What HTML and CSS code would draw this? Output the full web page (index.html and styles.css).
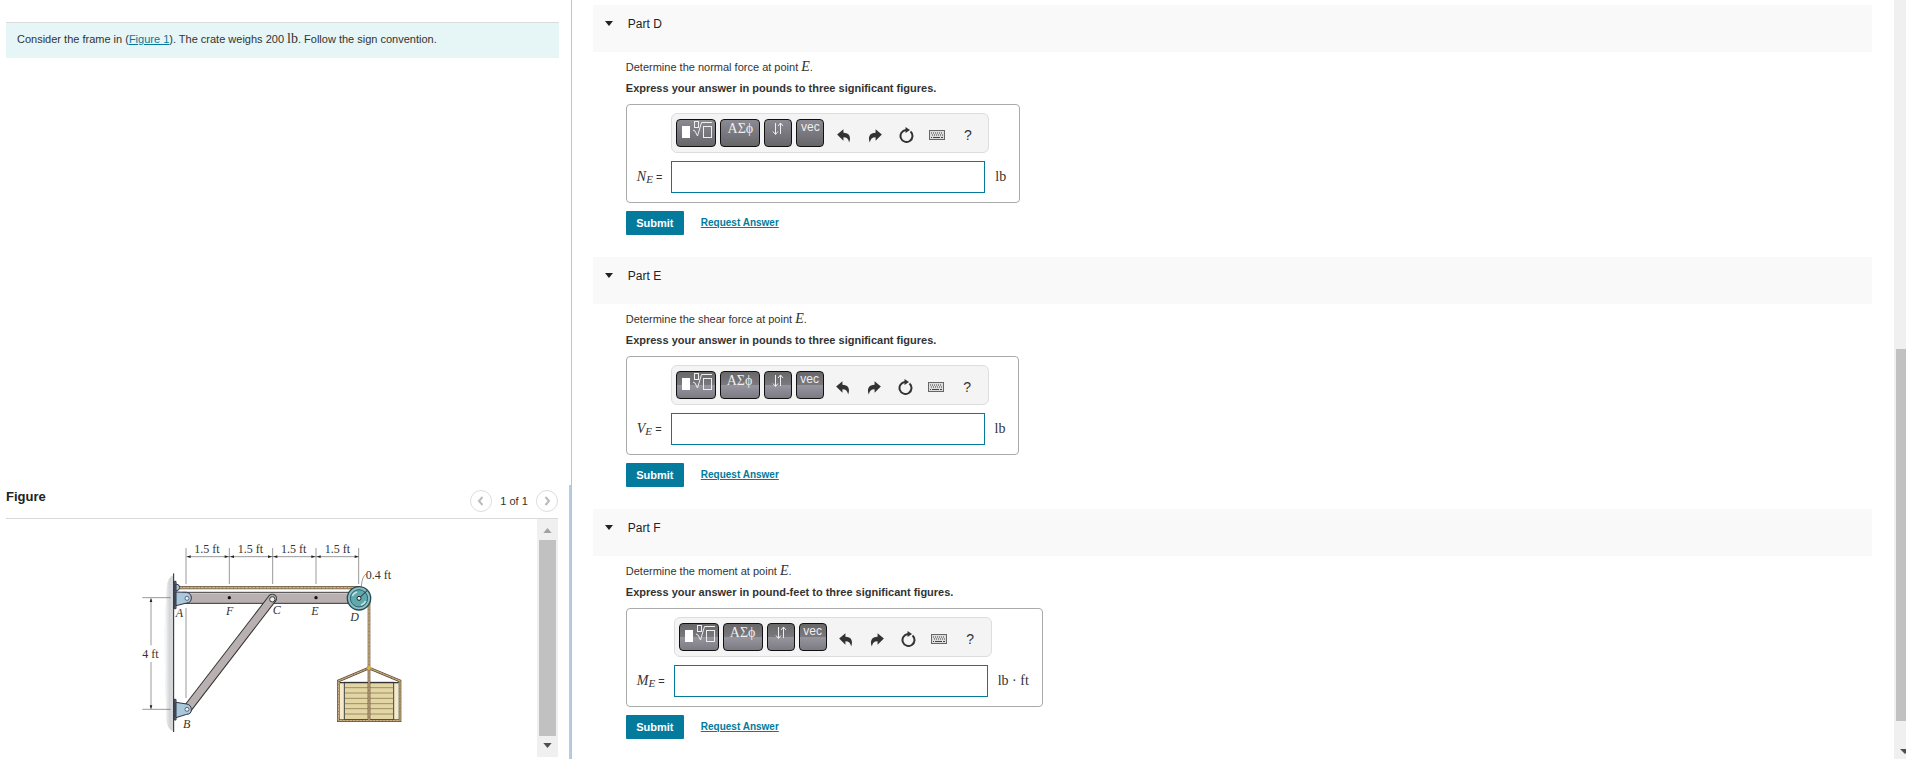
FILE: index.html
```html
<!DOCTYPE html>
<html lang="en">
<head>
  <meta charset="UTF-8">
  <meta name="viewport" content="width=device-width, initial-scale=1.0">
  <title>Frame Problem</title>
  <link rel="stylesheet" href="styles.css">
</head>
<body>
  <!-- shared icons -->
  <svg class="sprite" aria-hidden="true">
    <symbol id="icon-template" viewBox="0 0 34 24">
      <rect x="3" y="6" width="8" height="12" fill="#fff"/>
      <rect x="15.500" y="1.500" width="4" height="6" fill="none" stroke="#eee"/>
      <path d="M14 10l2 1 2.500 5 4-13.500H33" fill="none" stroke="#eee"/>
      <rect x="24.500" y="6.500" width="8" height="11" fill="none" stroke="#eee"/>
    </symbol>
    <symbol id="icon-arrows" viewBox="0 0 12 14">
      <path d="M3.500 1v11M1 9.500l2.500 3 2.500-3M8.500 12V1M6 4l2.500-3L11 4" fill="none" stroke="#eee"/>
    </symbol>
    <symbol id="icon-undo" viewBox="0 0 14 14">
      <path d="M1 6.500L6.500 2v3c5 0 7 3.500 5 8.500-.500-3-2-4.500-5-4.500v3z" fill="#333"/>
    </symbol>
    <symbol id="icon-redo" viewBox="0 0 14 14">
      <path d="M13 6.500L7.500 2v3c-5 0-7 3.500-5 8.500.500-3 2-4.500 5-4.500v3z" fill="#333"/>
    </symbol>
    <symbol id="icon-reset" viewBox="0 0 16 16">
      <path d="M12.500 4.500A6 6 0 1 1 8 3" fill="none" stroke="#333" stroke-width="2"/>
      <path d="M7.500 0l4.500 3-4.500 3z" fill="#333"/>
    </symbol>
    <symbol id="icon-keyboard" viewBox="0 0 18 12">
      <rect x="1.500" y="1.500" width="15" height="9" fill="#ddd" stroke="#666"/>
      <path d="M3 4h12M4 6h12" stroke="#444" stroke-dasharray="1 1"/>
      <path d="M3 8.500h1M5 8.500h7M13 8.500h2" stroke="#444"/>
    </symbol>
  </svg>

  <div class="page">
    <div class="left-panel">
      <div class="intro">Consider the frame in (<a href="#figure">Figure 1</a>). The crate weighs 200 <span class="unit-text">lb</span>. Follow the sign convention.</div>

      <section class="figure-panel" id="figure">
        <div class="figure-header">
          <h2>Figure</h2>
          <div class="pager">
            <button type="button" aria-label="Previous figure"><svg viewBox="0 0 10 10"><path d="M6.500 1L3 5l3.500 4"/></svg></button>
            <span>1 of 1</span>
            <button type="button" aria-label="Next figure"><svg viewBox="0 0 10 10"><path d="M3.500 1L7 5 3.500 9"/></svg></button>
          </div>
        </div>
        <div class="figure-body">
          <div class="figure-view">
            <svg class="diagram" viewBox="0 0 849 660" role="img" aria-label="Frame with pulley and crate">
              <defs>
                <pattern id="stone" width="14" height="17" patternUnits="userSpaceOnUse">
                  <rect width="14" height="17" fill="#d3d4d6"/>
                  <path d="M2 3h3M9 7h3M4 12h2M11 15h2" stroke="#f4f4f4" stroke-width="2"/>
                </pattern>
                <linearGradient id="wallFade">
                  <stop offset="0" stop-color="#fff"/>
                  <stop offset="0.500" stop-color="#fff" stop-opacity="0"/>
                </linearGradient>
              </defs>
              <!-- wall -->
              <path d="M131 135Q112 140 110 175L104 300 105 430 110 575Q114 600 131 604z" fill="url(#stone)"/>
              <path d="M131 135Q112 140 110 175L104 300 105 430 110 575Q114 600 131 604z" fill="url(#wallFade)"/>
              <path d="M131 130V606" stroke="#222" stroke-width="3"/>

              <!-- dimensions -->
              <g stroke="#666" stroke-width="2" fill="none">
                <path d="M168 54V162M298 54V162M428 54V162M558 54V162M686 54V162M168 234V504"/>
                <path d="M170 80H686M37 203H122M37 538H122M63 206V346M63 396V536"/>
                <path d="M708 132Q696 140 694 168"/>
              </g>
              <path d="M170 80l12-4v8zM296 80l-12-4v8zM300 80l12-4v8zM426 80l-12-4v8zM430 80l12-4v8zM556 80l-12-4v8zM560 80l12-4v8zM686 80l-12-4v8zM63 204l-4 12h8zM63 538l-4-12h8z" fill="#222"/>

              <!-- rope and beam -->
              <path d="M145 173H688" stroke="#69543a" stroke-width="10"/>
              <path d="M145 173H688" stroke="#cdb48c" stroke-width="5"/>
              <path d="M145 173H688" stroke="#8b7352" stroke-width="5" stroke-dasharray="2 9"/>
              <rect x="160" y="187" width="510" height="33" fill="#b9b1b1" stroke="#333" stroke-width="3"/>
              <path d="M160 190H668" stroke="#ddd8d8" stroke-width="2"/>
              <path d="M717 205V415" stroke="#69543a" stroke-width="8"/>
              <path d="M717 205V415" stroke="#d5ba8c" stroke-width="4"/>
              <path d="M717 205V415" stroke="#8b7352" stroke-width="4" stroke-dasharray="2 9"/>

              <!-- brace -->
              <path d="M173 535L427 205" stroke="#333" stroke-width="28" stroke-linecap="round"/>
              <path d="M173 535L427 205" stroke="#b9b1b1" stroke-width="22" stroke-linecap="round"/>
              <circle cx="427" cy="208" r="8" fill="#eee" stroke="#333" stroke-width="3"/>
              <circle cx="298" cy="203" r="5" fill="#111"/>
              <circle cx="558" cy="203" r="5" fill="#111"/>

              <!-- wall brackets -->
              <g fill="#a9c8dc" stroke="#334" stroke-width="3">
                <path d="M133 154h5v82h-5zM133 508h5v62h-5z" fill="#70838f"/>
                <path d="M138 162q11 1 11 10t-11 11z"/>
                <path d="M138 186L170 187Q184 190 184 204T170 219L138 227z"/>
                <path d="M138 517L170 522Q184 525 184 539T170 553L138 563z"/>
                <circle cx="171" cy="205" r="6" fill="#eee" stroke-width="2"/>
                <circle cx="171" cy="538" r="6" fill="#eee" stroke-width="2"/>
              </g>

              <!-- pulley -->
              <circle cx="687" cy="205" r="35" fill="#8dbfc4" stroke="#244a52" stroke-width="4"/>
              <circle cx="687" cy="205" r="26" fill="#5ea9ae" stroke="#2c6269" stroke-width="3"/>
              <path d="M667 198a21 21 0 0 1 14-12M707 213a21 21 0 0 1-14 12" stroke="#c5e5e5" stroke-width="5" fill="none"/>
              <path d="M689 203L711 182" stroke="#222" stroke-width="3"/>
              <circle cx="687" cy="205" r="6" fill="#eee" stroke="#222" stroke-width="3"/>

              <!-- crate -->
              <rect x="630" y="457" width="176" height="112" fill="#f2eacb"/>
              <rect x="643" y="457" width="148" height="112" fill="#e3d6a4" stroke="#444" stroke-width="3"/>
              <path d="M645 473H790M645 489H790M645 505H790M645 521H790M645 536H790M645 552H790" stroke="#74694a" stroke-width="2"/>
              <path d="M630 458H806" stroke="#333" stroke-width="4"/>
              <path d="M717 414L625 453V572H810V453L717 414V570" fill="none" stroke="#594831" stroke-width="8"/>
              <path d="M717 414L625 453V572H810V453L717 414V570" fill="none" stroke="#ceb184" stroke-width="4"/>
              <path d="M717 414L625 453V572H810V453L717 414V570" fill="none" stroke="#8b7352" stroke-width="4" stroke-dasharray="2 8"/>
              <circle cx="717" cy="414" r="6" fill="#e2b13c"/>

              <g class="dimension-text">
                <text x="193" y="70">1.5 ft</text>
                <text x="323" y="70">1.5 ft</text>
                <text x="453" y="70">1.5 ft</text>
                <text x="584" y="70">1.5 ft</text>
                <text x="707" y="147">0.4 ft</text>
                <text x="37" y="384">4 ft</text>
              </g>
              <g class="point-text">
                <text x="137" y="260">A</text>
                <text x="288" y="255">F</text>
                <text x="428" y="251">C</text>
                <text x="544" y="255">E</text>
                <text x="661" y="274">D</text>
                <text x="159" y="593">B</text>
              </g>
            </svg>
          </div>
          <div class="figure-scroll">
            <svg viewBox="0 0 10 6"><path d="M5 0l5 6H0z" fill="#a3a3a3"/></svg>
            <div class="figure-thumb"></div>
            <svg viewBox="0 0 10 6"><path d="M0 0h10L5 6z" fill="#505050"/></svg>
          </div>
        </div>
      </section>
    </div>

    <main class="content">
      <section class="part">
        <h3 class="part-header"><span class="caret"></span>Part D</h3>
        <form class="part-body">
          <p class="question">Determine the normal force at point <i>E</i>.</p>
          <p class="hint">Express your answer in pounds to three significant figures.</p>
          <div class="answer-box">
            <div class="toolbar">
              <button type="button" class="key wide" aria-label="Templates"><svg class="template"><use href="#icon-template"/></svg></button>
              <button type="button" class="key wide greek">ΑΣϕ</button>
              <button type="button" class="key" aria-label="Arrows"><svg class="arrows"><use href="#icon-arrows"/></svg></button>
              <button type="button" class="key">vec</button>
              <button type="button" class="tool" aria-label="Undo"><svg><use href="#icon-undo"/></svg></button>
              <button type="button" class="tool" aria-label="Redo"><svg><use href="#icon-redo"/></svg></button>
              <button type="button" class="tool" aria-label="Reset"><svg><use href="#icon-reset"/></svg></button>
              <button type="button" class="tool keyboard" aria-label="Keyboard shortcuts"><svg><use href="#icon-keyboard"/></svg></button>
              <button type="button" class="tool">?</button>
            </div>
            <label for="answerD"><i>N<sub>E</sub></i> =</label>
            <input type="text" id="answerD">
            <span class="unit">lb</span>
          </div>
          <div class="actions">
            <button type="submit" class="submit">Submit</button>
            <a href="#">Request Answer</a>
          </div>
        </form>
      </section>

      <section class="part">
        <h3 class="part-header"><span class="caret"></span>Part E</h3>
        <form class="part-body">
          <p class="question">Determine the shear force at point <i>E</i>.</p>
          <p class="hint">Express your answer in pounds to three significant figures.</p>
          <div class="answer-box split">
            <div class="toolbar">
              <button type="button" class="key wide" aria-label="Templates"><svg class="template"><use href="#icon-template"/></svg></button>
              <button type="button" class="key wide greek">ΑΣϕ</button>
              <button type="button" class="key" aria-label="Arrows"><svg class="arrows"><use href="#icon-arrows"/></svg></button>
              <button type="button" class="key">vec</button>
              <button type="button" class="tool" aria-label="Undo"><svg><use href="#icon-undo"/></svg></button>
              <button type="button" class="tool" aria-label="Redo"><svg><use href="#icon-redo"/></svg></button>
              <button type="button" class="tool" aria-label="Reset"><svg><use href="#icon-reset"/></svg></button>
              <button type="button" class="tool keyboard" aria-label="Keyboard shortcuts"><svg><use href="#icon-keyboard"/></svg></button>
              <button type="button" class="tool">?</button>
            </div>
            <label for="answerE"><i>V<sub>E</sub></i> =</label>
            <input type="text" id="answerE">
            <span class="unit">lb</span>
          </div>
          <div class="actions">
            <button type="submit" class="submit">Submit</button>
            <a href="#">Request Answer</a>
          </div>
        </form>
      </section>

      <section class="part">
        <h3 class="part-header"><span class="caret"></span>Part F</h3>
        <form class="part-body">
          <p class="question">Determine the moment at point <i>E</i>.</p>
          <p class="hint">Express your answer in pound-feet to three significant figures.</p>
          <div class="answer-box split">
            <div class="toolbar">
              <button type="button" class="key wide" aria-label="Templates"><svg class="template"><use href="#icon-template"/></svg></button>
              <button type="button" class="key wide greek">ΑΣϕ</button>
              <button type="button" class="key" aria-label="Arrows"><svg class="arrows"><use href="#icon-arrows"/></svg></button>
              <button type="button" class="key">vec</button>
              <button type="button" class="tool" aria-label="Undo"><svg><use href="#icon-undo"/></svg></button>
              <button type="button" class="tool" aria-label="Redo"><svg><use href="#icon-redo"/></svg></button>
              <button type="button" class="tool" aria-label="Reset"><svg><use href="#icon-reset"/></svg></button>
              <button type="button" class="tool keyboard" aria-label="Keyboard shortcuts"><svg><use href="#icon-keyboard"/></svg></button>
              <button type="button" class="tool">?</button>
            </div>
            <label for="answerF"><i>M<sub>E</sub></i> =</label>
            <input type="text" id="answerF">
            <span class="unit">lb · ft</span>
          </div>
          <div class="actions">
            <button type="submit" class="submit">Submit</button>
            <a href="#">Request Answer</a>
          </div>
        </form>
      </section>
    </main>

    <div class="page-scroll">
      <div class="page-thumb"></div>
      <svg viewBox="0 0 12 12"><path d="M6 0h12l-6 6z" fill="#505050"/></svg>
    </div>
  </div>
</body>
</html>
```
FILE: styles.css
```css
* {
  box-sizing: border-box;
}

body {
  margin: 0;
  font-family: "Liberation Sans", Arial, sans-serif;
  font-size: 11px;
  line-height: 16px;
  color: #333;
  background: #fff;
}

a {
  color: #047a9c;
}

i, .unit, .unit-text {
  font-family: "Liberation Serif", "Times New Roman", serif;
  font-size: 14px;
}

button {
  font-family: inherit;
  padding: 0;
  cursor: pointer;
}

.sprite {
  display: none;
}

.page {
  display: flex;
  height: 100vh;
  overflow: hidden;
}

/* left column */
.left-panel {
  flex: none;
  width: 30%;
  display: flex;
  flex-direction: column;
  border-right: 1px solid #bcc6d2;
}

.intro {
  margin: 22px 12px 0 6px;
  padding: 8px 11px 11px;
  background: #e6f5f6;
  border-top: 1px solid #d9dcdc;
}

.figure-panel {
  margin-top: auto;
  padding: 0 11px 2px 6px;
  border-right: 2px solid #b8cce0;
}

.figure-header {
  display: flex;
  justify-content: space-between;
  height: 34px;
  border-bottom: 1px solid #d9d9d9;
}

.figure-header h2 {
  margin: 4px 0 0;
  font-size: 13px;
  font-weight: bold;
  color: #222;
}

.pager {
  display: flex;
  align-items: center;
  gap: 8px;
  padding-bottom: 2px;
}

.pager button {
  display: flex;
  align-items: center;
  justify-content: center;
  width: 22px;
  height: 22px;
  background: #fff;
  border: 1px solid #ddd;
  border-radius: 50%;
}

.pager svg {
  width: 10px;
  height: 10px;
  fill: none;
  stroke: #bbb;
  stroke-width: 2;
}

.figure-body {
  display: flex;
  height: 238px;
}

.figure-view {
  flex: 1;
  padding-top: 11px;
  text-align: center;
}

.diagram {
  width: 283px;
  height: 220px;
}

.dimension-text, .point-text {
  font-family: "Liberation Serif", "Times New Roman", serif;
  font-size: 36px;
  fill: #333;
}

.point-text {
  font-style: italic;
}

.figure-scroll {
  display: flex;
  flex-direction: column;
  align-items: center;
  gap: 7px;
  width: 21px;
  padding: 9px 0;
  background: #f0f0f0;
}

.figure-scroll svg {
  width: 9px;
  height: 5px;
}

.figure-thumb {
  flex: 1;
  width: 17px;
  background: #c1c1c1;
}

/* parts */
.content {
  flex: 1;
  padding: 5px 22px 0 21px;
}

.part {
  margin-bottom: 22px;
}

.part-header {
  display: flex;
  align-items: center;
  gap: 15px;
  height: 47px;
  margin: 0;
  padding: 0 12px 10px;
  font-size: 12px;
  font-weight: normal;
  color: #222;
  background: #f9f9f9;
}

.caret {
  border: 4px solid transparent;
  border-top: 5px solid #222;
  border-bottom: 0;
}

.part-body {
  padding: 7px 0 0 33px;
}

.question, .hint {
  height: 16px;
  margin: 0 0 5px;
}

.hint {
  margin-bottom: 8px;
  font-weight: bold;
}

.answer-box {
  display: inline-grid;
  grid-template-columns: auto 314px auto;
  align-items: center;
  align-content: start;
  row-gap: 8px;
  height: 99px;
  padding: 8px 13px 8px 10px;
  border: 1px solid #aaa;
  border-radius: 4px;
}

.toolbar {
  grid-column: 2 / 4;
  display: flex;
  align-items: center;
  width: 318px;
  height: 40px;
  padding: 0 4px;
  background: #f4f4f4;
  border: 1px solid #ddd;
  border-radius: 6px;
}

.key {
  display: flex;
  align-items: flex-start;
  justify-content: center;
  width: 28px;
  height: 28px;
  margin-right: 4px;
  font-size: 12px;
  line-height: 14px;
  color: #eee;
  background: linear-gradient(#8b8a93, #66666a);
  border: 1px solid #111;
  border-radius: 4px;
}

.split .key {
  background: linear-gradient(#68686a, #7a7a7e 50%, #96959f 52%, #7c7b83);
}

.wide {
  width: 40px;
}

.greek {
  font-family: "Liberation Serif", "Times New Roman", serif;
  font-size: 14px;
  line-height: 18px;
}

.template {
  width: 34px;
  height: 24px;
}

.arrows {
  width: 12px;
  height: 14px;
  margin-top: 2px;
}

.tool {
  display: flex;
  align-items: center;
  justify-content: center;
  width: 31px;
  height: 28px;
  padding-top: 4px;
  font-size: 14px;
  color: #333;
  background: none;
  border: 0;
}

.tool svg {
  width: 16px;
  height: 16px;
}

.keyboard svg {
  width: 18px;
  height: 12px;
}

label {
  grid-column: 1;
  padding-right: 9px;
  white-space: nowrap;
}

sub {
  font-size: 11px;
  line-height: 0;
  vertical-align: -2px;
}

.answer-box input {
  width: 100%;
  height: 32px;
  padding: 0 6px;
  font-size: 14px;
  border: 1px solid #047a9c;
}

.unit {
  padding-left: 10px;
}

.actions {
  display: flex;
  align-items: center;
  gap: 17px;
  margin-top: 8px;
}

.submit {
  width: 58px;
  height: 24px;
  font-size: 11px;
  font-weight: bold;
  color: #fff;
  background: #047a9c;
  border: 0;
  border-radius: 1px;
}

.actions a {
  font-size: 10px;
  font-weight: bold;
}

/* page scrollbar */
.page-scroll {
  flex: none;
  display: flex;
  flex-direction: column;
  width: 12px;
  background: #f0f0f0;
}

.page-thumb {
  height: 49%;
  margin: auto 0 28px 2px;
  background: #c1c1c1;
}

.page-scroll svg {
  width: 12px;
  height: 10px;
}
```
